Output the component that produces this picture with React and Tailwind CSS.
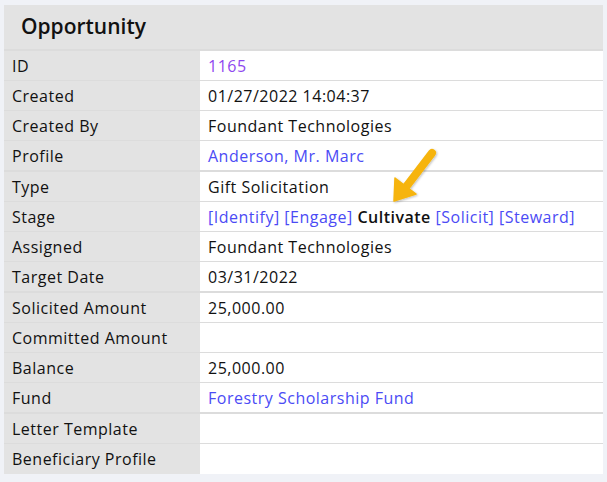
// App.jsx
const rows = [
  { label: "ID", value: "1165", kind: "visited" },
  { label: "Created", value: "01/27/2022 14:04:37" },
  { label: "Created By", value: "Foundant Technologies" },
  { label: "Profile", value: "Anderson, Mr. Marc", kind: "link", groupEnd: true },
  { label: "Type", value: "Gift Solicitation" },
  { label: "Stage", kind: "stage" },
  { label: "Assigned", value: "Foundant Technologies" },
  { label: "Target Date", value: "03/31/2022", groupEnd: true },
  { label: "Solicited Amount", value: "25,000.00" },
  { label: "Committed Amount", value: "" },
  { label: "Balance", value: "25,000.00" },
  { label: "Fund", value: "Forestry Scholarship Fund", kind: "link", groupEnd: true },
  { label: "Letter Template", value: "" },
  { label: "Beneficiary Profile", value: "" },
];

const Stage = () => (
  <span>
    <a className="text-[#4b4bf5]">[Identify]</a>{" "}
    <a className="text-[#4b4bf5]">[Engage]</a>{" "}
    <span className="font-semibold text-[#111]">Cultivate</span>{" "}
    <a className="text-[#4b4bf5]">[Solicit]</a>{" "}
    <a className="text-[#4b4bf5]">[Steward]</a>
  </span>
);

const Arrow = () => (
  <svg className="absolute left-[388px] top-[144px] pointer-events-none" width="52" height="62" viewBox="388 144 52 62">
    <defs>
      <filter id="sh" x="-20%" y="-20%" width="140%" height="140%">
        <feDropShadow dx="1" dy="1" stdDeviation="1" floodColor="#000" floodOpacity="0.25" />
      </filter>
    </defs>
    <g filter="url(#sh)" fill="#f6b40a" stroke="#f6b40a">
      <line x1="432" y1="153" x2="406" y2="187" strokeWidth="8" strokeLinecap="round" />
      <polygon points="394,201 395,178 416,194" strokeWidth="1.5" strokeLinejoin="round" />
    </g>
  </svg>
);

export default function App() {
  return (
    <div className="relative min-h-[482px] bg-[#f0f2f7] pt-[5px] px-[4px]" style={{ fontFamily: '"Open Sans", "Noto Sans", sans-serif' }}>
      <div className="w-[599px] bg-white">
        <div className="h-[46px] bg-[#e3e3e3] flex items-center pl-[17px] border-b-2 border-[#dcdcdc]">
          <h1 className="text-[21px] font-semibold text-[#111]">Opportunity</h1>
        </div>
        {rows.map((r, i) => (
          <div
            key={r.label}
            className={`flex text-[16px] tracking-[0.5px] text-[#111] ${
              i === rows.length - 1
                ? "h-[30px]"
                : r.groupEnd
                ? "h-[31px] border-b-2 border-[#dcdcdc]"
                : "h-[30px] border-b border-[#dcdcdc]"
            }`}
          >
            <div className="w-[196px] bg-[#e3e3e3] pl-[8px] flex items-center">{r.label}</div>
            <div className="flex-1 pl-[8px] flex items-center">
              {r.kind === "stage" ? (
                <Stage />
              ) : r.kind === "visited" ? (
                <span className="text-[#8f48f0]">{r.value}</span>
              ) : r.kind === "link" ? (
                <span className="text-[#4b4bf5]">{r.value}</span>
              ) : (
                r.value
              )}
            </div>
          </div>
        ))}
      </div>
      <Arrow />
    </div>
  );
}
